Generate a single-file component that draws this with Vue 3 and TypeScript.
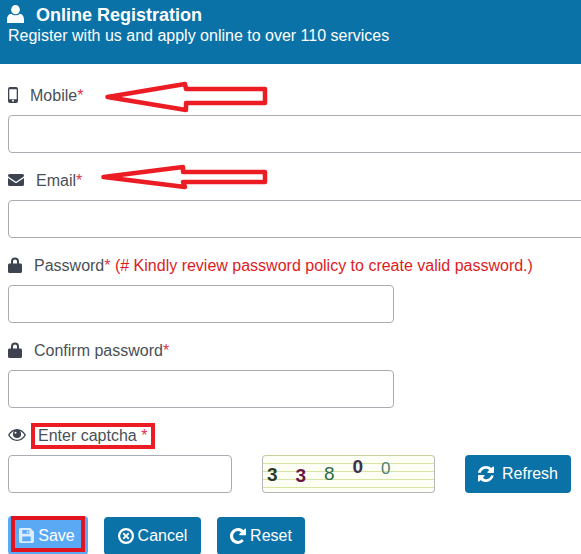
<script setup lang="ts">
const digits = [
  { ch: '3', color: '#2b3a2b', size: 19, weight: 700, y: 0 },
  { ch: '3', color: '#6b1246', size: 19, weight: 700, y: 1 },
  { ch: '8', color: '#2f6b4a', size: 19, weight: 400, y: -1 },
  { ch: '0', color: '#40304f', size: 19, weight: 700, y: -8 },
  { ch: '0', color: '#4f8078', size: 17, weight: 400, y: -6 }
]
</script>

<template>
  <div class="page">
    <header class="head">
      <h1 class="title">
        <svg class="ic-user" viewBox="0 0 16 16" preserveAspectRatio="none"><circle cx="8" cy="4.2" r="4.100" fill="#fff" /><path d="M0 16v-3.200C0 10 1.800 7.900 4 7.700c1 .9 2.500 1.400 4 1.400s3-.5 4-1.400c2.200.2 4 2.300 4 5.100V16z" fill="#fff" /></svg>
        Online Registration
      </h1>
      <p class="sub">Register with us and apply online to over 110 services</p>
    </header>

    <form class="form" @submit.prevent>
      <div class="field">
        <label class="lab">
          <svg class="ic mobile" viewBox="0 0 10 16"><path fill-rule="evenodd" d="M2 0h6a2 2 0 0 1 2 2v12a2 2 0 0 1-2 2H2a2 2 0 0 1-2-2V2a2 2 0 0 1 2-2zM1.300 2.300v9.900h7.400V2.300zM5 12.800a1 1 0 1 0 0 2 1 1 0 0 0 0-2z" /></svg>
          <span>Mobile<i>*</i></span>
        </label>
        <input class="inp wide" type="text" />
        <svg class="arrow a1" width="170" height="36" viewBox="0 0 170 36"><path d="M4.500 17 L82 4 L83 9 L162 9 L162 23 L83 23 L83 30 Z" fill="#fff" stroke="#ec1c24" stroke-width="4.500" stroke-linejoin="round" /></svg>
      </div>

      <div class="field">
        <label class="lab">
          <svg class="ic env" viewBox="0 0 16 12"><path d="M1.500 0h13A1.500 1.500 0 0 1 16 1.500c0 .5-.3 1-.8 1.400L8 7.800.8 2.900C.3 2.500 0 2 0 1.500A1.500 1.500 0 0 1 1.500 0z" /><path d="M0 4l7.200 4.700c.5.300 1.100.3 1.600 0L16 4v6.500a1.500 1.500 0 0 1-1.500 1.500h-13A1.500 1.500 0 0 1 0 10.500z" /></svg>
          <span>Email<i>*</i></span>
        </label>
        <input class="inp wide" type="text" />
        <svg class="arrow a2" width="172" height="30" viewBox="0 0 172 30"><path d="M4.500 14 L84 4 L84 9 L166 9 L166 19 L84 19 L86 24 Z" fill="#fff" stroke="#ec1c24" stroke-width="4.500" stroke-linejoin="round" /></svg>
      </div>

      <div class="field">
        <label class="lab">
          <svg class="ic lock" viewBox="0 0 14 16"><path fill-rule="evenodd" d="M3 6.500V4.500a4 4 0 0 1 8 0v2h1.500c.8 0 1.500.7 1.500 1.500v6.500c0 .8-.7 1.500-1.500 1.500h-11C.7 16 0 15.300 0 14.500V8c0-.8.700-1.500 1.500-1.500zM5 6.500h4V4.500a2 2 0 0 0-4 0z" /></svg>
          <span>Password<i>*</i> <em>(# Kindly review password policy to create valid password.)</em></span>
        </label>
        <input class="inp mid" type="password" />
      </div>

      <div class="field">
        <label class="lab">
          <svg class="ic lock" viewBox="0 0 14 16"><path fill-rule="evenodd" d="M3 6.500V4.500a4 4 0 0 1 8 0v2h1.500c.8 0 1.500.7 1.500 1.500v6.500c0 .8-.7 1.500-1.500 1.500h-11C.7 16 0 15.300 0 14.500V8c0-.8.700-1.500 1.500-1.500zM5 6.500h4V4.500a2 2 0 0 0-4 0z" /></svg>
          <span>Confirm password<i>*</i></span>
        </label>
        <input class="inp mid" type="password" />
      </div>

      <div class="field">
        <label class="lab">
          <svg class="ic eye" viewBox="0 0 18 12"><path fill-rule="evenodd" d="M9 0c3.700 0 6.900 2.300 9 6-2.100 3.700-5.300 6-9 6S2.100 9.700 0 6c2.100-3.700 5.300-6 9-6zM1.500 6c1.900 2.900 4.500 4.800 7.500 4.800s5.600-1.900 7.500-4.800C15.300 4.100 13.800 2.700 12 1.900c.7.800 1.100 1.900 1.100 3.100a4.100 4.100 0 0 1-8.200 0c0-1.200.4-2.300 1.100-3.100C4.200 2.700 2.700 4.100 1.500 6zM7.500 2.800a1 1 0 0 0 0 2 1 1 0 0 0 0-2z" /></svg>
          <span class="t-cap">Enter captcha <i>*</i></span>
        </label>
        <div class="cap-row">
          <input class="inp small" type="text" />
          <div class="captcha">
            <span
              v-for="(d, i) in digits"
              :key="i"
              class="digit"
              :style="{ color: d.color, fontSize: d.size + 'px', fontWeight: d.weight, top: d.y + 'px' }"
            >{{ d.ch }}</span>
          </div>
          <button class="btn refresh" type="button">
            <svg class="bi" viewBox="0 0 16 16"><path d="M15.700 9.600C14.900 13.200 11.800 16 8 16c-2 0-3.900-.8-5.400-2.100L1.100 15.400c-.1.100-.3.200-.5.200-.3 0-.6-.3-.6-.6V9.700c0-.3.300-.6.600-.6H6c.3 0 .6.300.6.600 0 .2-.1.300-.2.500L4.700 11.800c1 .9 2.200 1.500 3.500 1.500 1.800 0 3.500-.9 4.400-2.500.2-.4.400-.8.500-1.200.1-.1.100-.2.300-.2h2.300c.2 0 .3.100.3.300zM16 .9v5.400c0 .3-.3.600-.6.600H10c-.3 0-.6-.3-.6-.6 0-.2.100-.3.200-.5l1.700-1.600c-1-.9-2.200-1.400-3.500-1.400-1.800 0-3.500.9-4.400 2.500-.2.400-.4.800-.5 1.200-.1.100-.1.200-.3.200H.3C.1 6.700 0 6.600 0 6.400 .8 2.800 4.100 0 8 0c2 0 4 .8 5.500 2.100L14.900.6c.1-.1.300-.2.500-.2.300 0 .6.300.6.500z" /></svg>
            Refresh
          </button>
        </div>
      </div>

      <div class="actions">
        <button class="btn save" type="button">
          <svg class="bi floppy" viewBox="0 0 16 16"><path fill-rule="evenodd" d="M1.500 0h10.600L16 3.900v10.600c0 .8-.7 1.500-1.500 1.500h-13C.7 16 0 15.300 0 14.500v-13C0 .7.700 0 1.500 0zM3.500 2h7.500v4.200H3.500zM8.300 2.800h1.600v2.600H8.300zM3.500 9h9v5.200h-9z" /></svg>
          Save
        </button>
        <button class="btn cancel" type="button">
          <svg class="bi" viewBox="0 0 16 16"><path fill-rule="evenodd" d="M8 0a8 8 0 1 1 0 16A8 8 0 0 1 8 0zm0 2.200a5.800 5.800 0 1 0 0 11.600A5.800 5.800 0 0 0 8 2.200zM5.900 4.600 8 6.700l2.100-2.100 1.300 1.300L9.300 8l2.100 2.100-1.300 1.300L8 9.300l-2.100 2.100-1.300-1.300L6.700 8 4.600 5.900z" /></svg>
          Cancel
        </button>
        <button class="btn reset" type="button">
          <svg class="bi" viewBox="0 0 16 16"><path d="M16 1v5.600c0 .3-.3.600-.6.600H9.800c-.3 0-.6-.3-.6-.6 0-.2.100-.3.200-.5l1.700-1.700C10.100 3.500 9.100 3.100 8 3.100A4.900 4.900 0 1 0 11.700 11.300c.1-.1.300-.1.400 0l1.400 1.500c.1.100.1.300 0 .4A7.500 7.500 0 0 1 8 16 8 8 0 1 1 13.500 2.200L15 .6c.2-.2.400-.2.600-.1.200.1.400.3.400.5z" /></svg>
          Reset
        </button>
      </div>
    </form>
  </div>
</template>

<style>
html, body { margin: 0; background: #fff; overflow: hidden; }
</style>

<style scoped>
.page {
  width: 581px;
  height: 554px;
  overflow: hidden;
  font-family: "Liberation Sans", Arial, sans-serif;
  font-size: 16px;
  color: #495057;
}
.head {
  box-sizing: border-box;
  height: 64px;
  background: #0b72a8;
  color: #fff;
  padding: 5px 8px 0;
}
.title {
  margin: 0;
  font-size: 18px;
  line-height: 21px;
  font-weight: 700;
  display: flex;
  align-items: center;
  gap: 12px;
}
.ic-user { width: 17px; height: 18px; margin: 0 0 3px -1px; flex: none; }
.sub { margin: 0; line-height: 20px; }
.form { padding: 19px 0 0 8px; }
.field { position: relative; margin-bottom: 15px; }
.lab {
  box-sizing: border-box;
  display: flex;
  align-items: center;
  height: 24px;
  padding-top: 2px;
  margin-bottom: 8px;
}
.ic { fill: #3d4450; flex: none; margin-bottom: 2px; }
.mobile { width: 10px; height: 16px; margin-right: 12px; }
.env { width: 16px; height: 12px; margin-right: 12px; }
.lock { width: 14px; height: 16px; margin-right: 12px; }
.eye { width: 18px; height: 12px; margin-right: 9px; }
i { font-style: normal; color: #dc3545; }
em { font-style: normal; color: #dc1c24; }
.t-cap { outline: 4px solid #ec1c24; outline-offset: 0; padding: 0 4px 0 3px; line-height: 18px; }
.inp {
  display: block;
  box-sizing: border-box;
  height: 38px;
  border: 1px solid #a9adb2;
  border-radius: 4px;
  background: #fff;
  padding: 0 12px;
  font: inherit;
}
.wide { width: 590px; }
.mid { width: 386px; }
.small { width: 224px; flex: none; }
.arrow { position: absolute; overflow: visible; pointer-events: none; }
.a1 { left: 95px; top: -3px; }
.a2 { left: 91px; top: -5px; }
.cap-row { display: flex; align-items: flex-start; }
.captcha {
  box-sizing: border-box;
  width: 173px;
  height: 38px;
  margin-left: 30px;
  padding-left: 4px;
  flex: none;
  border: 1px solid #b4b7bd;
  border-top-color: #c5cf9a;
  border-radius: 4px;
  display: flex;
  align-items: center;
  font-family: "Liberation Sans", sans-serif;
  background: repeating-linear-gradient(to bottom, #fdfff4 0, #fdfff4 7px, #d7e4a2 7px, #d7e4a2 8px);
  overflow: hidden;
}
.digit { position: relative; line-height: 1; width: 28.500px; flex: none; }
.btn {
  box-sizing: border-box;
  height: 38px;
  border: 0;
  border-radius: 4px;
  background: #0b72a8;
  color: #fff;
  font: inherit;
  display: inline-flex;
  align-items: center;
  justify-content: center;
  gap: 4px;
  padding: 0;
  position: relative;
}
.bi { width: 16px; height: 16px; fill: #fff; flex: none; }
.floppy { width: 15px; height: 15px; fill: #dcecff; }
.refresh { width: 106px; margin-left: 30px; gap: 8px; }
.actions { display: flex; margin-top: 24px; }
.save { width: 80px; height: 39px; background: #5aa9f5; margin-top: -1px; padding-right: 2px; }
.save::after {
  content: "";
  position: absolute;
  left: 3px;
  right: 3px;
  top: 0;
  bottom: 3px;
  border: 4px solid #e0141f;
}
.cancel { width: 97px; margin-left: 16px; }
.reset { width: 88px; margin-left: 16px; }
</style>
